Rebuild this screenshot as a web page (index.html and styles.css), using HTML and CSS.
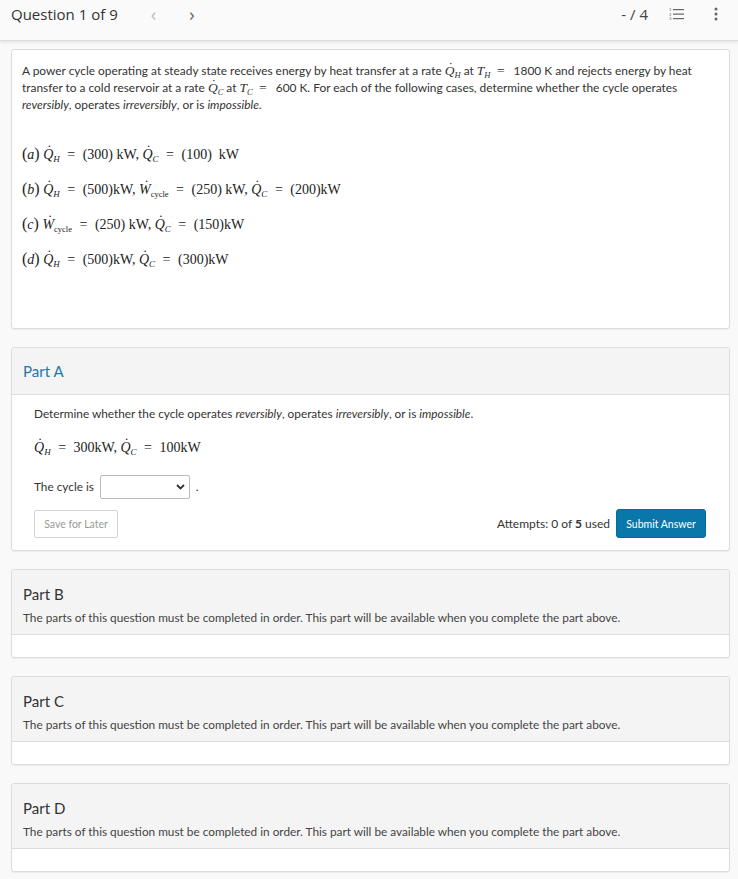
FILE: index.html
```html
<!DOCTYPE html>
<html>
<head>
<meta charset="utf-8">
<link rel="stylesheet" href="styles.css">
</head>
<body>
<header class="topbar">
  <div class="tb-left">
    <span class="qtitle">Question 1 of 9</span>
    <span class="nav prev">&lsaquo;</span>
    <span class="nav next">&rsaquo;</span>
  </div>
  <div class="tb-right">
    <span class="score">- / 4</span>
    <svg class="listicon" width="16" height="14" viewBox="0 0 16 14">
      <text x="0" y="4" font-size="4" fill="#666" font-family="DejaVu Sans">1</text>
      <text x="0" y="8.5" font-size="4" fill="#666" font-family="DejaVu Sans">2</text>
      <text x="0" y="13" font-size="4" fill="#666" font-family="DejaVu Sans">3</text>
      <rect x="4" y="2" width="11" height="1.2" fill="#666"/>
      <rect x="4" y="6.5" width="11" height="1.2" fill="#666"/>
      <rect x="4" y="11" width="11" height="1.2" fill="#666"/>
    </svg>
    <svg class="kebab" width="4" height="14" viewBox="0 0 4 14">
      <circle cx="2" cy="2" r="1.5" fill="#666"/>
      <circle cx="2" cy="7" r="1.5" fill="#666"/>
      <circle cx="2" cy="12" r="1.5" fill="#666"/>
    </svg>
  </div>
</header>

<main class="content">
  <section class="card intro">
    <p class="lead">A power cycle operating at steady state receives energy by heat transfer at a rate <span class="m"><span class="dot">Q</span><sub>H</sub></span> at <span class="m"><i>T</i><sub>H</sub> <span class="eq">=</span></span> &nbsp;1800 K and rejects energy by heat transfer to a cold reservoir at a rate <span class="m"><span class="dot">Q</span><sub>C</sub></span> at <span class="m"><i>T</i><sub>C</sub> <span class="eq">=</span></span> &nbsp;600 K. For each of the following cases, determine whether the cycle operates <em>reversibly</em>, operates <em>irreversibly</em>, or is <em>impossible</em>.</p>
    <div class="cases">
      <div class="mline"><span class="par">(</span><i>a</i><span class="par">)</span> <span class="dot">Q</span><sub>H</sub> <span class="eq">=</span> (300) kW, <span class="dot">Q</span><sub>C</sub> <span class="eq">=</span> (100) &nbsp;kW</div>
      <div class="mline"><span class="par">(</span><i>b</i><span class="par">)</span> <span class="dot">Q</span><sub>H</sub> <span class="eq">=</span> (500)kW, <span class="dot w">W</span><sub class="up">cycle</sub> <span class="eq">=</span> (250) kW, <span class="dot">Q</span><sub>C</sub> <span class="eq">=</span> (200)kW</div>
      <div class="mline"><span class="par">(</span><i>c</i><span class="par">)</span> <span class="dot w">W</span><sub class="up">cycle</sub> <span class="eq">=</span> (250) kW, <span class="dot">Q</span><sub>C</sub> <span class="eq">=</span> (150)kW</div>
      <div class="mline"><span class="par">(</span><i>d</i><span class="par">)</span> <span class="dot">Q</span><sub>H</sub> <span class="eq">=</span> (500)kW, <span class="dot">Q</span><sub>C</sub> <span class="eq">=</span> (300)kW</div>
    </div>
  </section>

  <section class="card part">
    <div class="part-head active">
      <h2 class="part-title blue">Part A</h2>
    </div>
    <div class="part-body">
      <p class="txt">Determine whether the cycle operates <em>reversibly</em>, operates <em>irreversibly</em>, or is <em>impossible</em>.</p>
      <div class="mline given"><span class="dot">Q</span><sub>H</sub> <span class="eq">=</span> 300kW, <span class="dot">Q</span><sub>C</sub> <span class="eq">=</span> 100kW</div>
      <div class="answer-row">
        <span class="txt">The cycle is</span>
        <span class="select">
          <svg width="9" height="6" viewBox="0 0 9 6"><path d="M1 1 L4.5 4.5 L8 1" stroke="#333" stroke-width="1.8" fill="none"/></svg>
        </span>
        <span class="txt">.</span>
      </div>
      <div class="actions">
        <button class="btn-save">Save for Later</button>
        <div class="submit-group">
          <span class="attempts">Attempts: 0 of <b>5</b> used</span>
          <button class="btn-submit">Submit Answer</button>
        </div>
      </div>
    </div>
  </section>

  <section class="card part">
    <div class="part-head locked">
      <h2 class="part-title">Part B</h2>
      <p class="locked-msg">The parts of this question must be completed in order. This part will be available when you complete the part above.</p>
    </div>
    <div class="part-foot"></div>
  </section>

  <section class="card part">
    <div class="part-head locked">
      <h2 class="part-title">Part C</h2>
      <p class="locked-msg">The parts of this question must be completed in order. This part will be available when you complete the part above.</p>
    </div>
    <div class="part-foot"></div>
  </section>

  <section class="card part">
    <div class="part-head locked">
      <h2 class="part-title">Part D</h2>
      <p class="locked-msg">The parts of this question must be completed in order. This part will be available when you complete the part above.</p>
    </div>
    <div class="part-foot"></div>
  </section>
</main>
</body>
</html>
```

FILE: styles.css
```css
* { box-sizing: border-box; }
html, body { margin: 0; padding: 0; }
body {
  background: #f9f9f9;
  font-family: Lato, "Open Sans", sans-serif;
  color: #333;
  width: 738px;
}

.topbar {
  height: 41px;
  background: #fafafa;
  border-bottom: 1px solid #dcdcdc;
  box-shadow: 0 2px 3px rgba(0,0,0,0.08);
  display: flex;
  align-items: center;
  justify-content: space-between;
  padding: 0 20px 0 11px;
  font-family: "Open Sans", sans-serif;
}
.tb-left { display: flex; align-items: center; margin-top: -12px; }
.qtitle { font-size: 15px; color: #333; }
.nav { font-size: 18px; color: #666; line-height: 1; }
.nav.prev { color: #bbb; margin-left: 33px; }
.nav.next { margin-left: 33px; }
.tb-right { display: flex; align-items: center; margin-top: -12px; }
.score { font-size: 15px; color: #444; }
.listicon { margin-left: 21px; }
.kebab { margin-left: 29px; }

.content {
  padding: 8px 8px 10px 11px;
  display: flex;
  flex-direction: column;
  gap: 18px;
}

.card {
  background: #fff;
  border: 1px solid #dcdcdc;
  border-radius: 3px;
  box-shadow: 0 1px 1px rgba(0,0,0,0.05);
}

.intro {
  padding: 12px 10px 58px 10px;
}
.lead {
  margin: 0;
  font-size: 11.9px;
  line-height: 17px;
  color: #333;
}
.lead em { font-style: italic; }
.m { font-family: "Liberation Serif", serif; font-size: 13.5px; line-height: 0; }
.m i { font-style: italic; }
.m sub { font-size: 8.5px; font-style: italic; vertical-align: -3px; line-height: 0; }
.m .eq { margin: 0 3px; }

.dot {
  position: relative;
  font-style: italic;
  font-family: "Liberation Serif", serif;
}
.dot::before {
  content: "\02D9";
  position: absolute;
  left: 0.27em;
  top: -0.22em;
  line-height: 1;
  font-style: normal;
  font-size: 1em;
}
.dot.w::before { left: 0.38em; }

.cases { margin-top: 31px; display: flex; flex-direction: column; gap: 14px; }
.mline {
  font-family: "Liberation Serif", serif;
  font-size: 14px;
  line-height: 20px;
  color: #222;
  white-space: nowrap;
}
.mline sub { font-size: 9px; font-style: italic; vertical-align: -3px; line-height: 0; }
.mline sub.up { font-style: normal; font-size: 8.5px; }
.mline i { font-style: italic; }
.par { font-size: 16px; }
.eq { margin: 0 4px; }

.part-head {
  background: #f4f4f4;
  border-bottom: 1px solid #dcdcdc;
  border-radius: 3px 3px 0 0;
}
.part-head.active { height: 47px; display: flex; align-items: center; padding: 0 11px; }
.part-head.locked { padding: 13px 11px 8px; }
.part-title {
  margin: 0;
  font-size: 15px;
  font-weight: 400;
  color: #333;
  line-height: 22px;
}
.part-title.blue { color: #2376a8; }
.locked-msg {
  margin: 5px 0 0;
  font-size: 11.8px;
  line-height: 16px;
  color: #444;
}
.part-foot { height: 22px; }

.part-body { padding: 11px 23px 12px 22px; }
.txt { font-size: 11.8px; color: #333; margin: 0; line-height: 16px; }
.txt em { font-style: italic; }
.given { margin-top: 16px; }
.answer-row { display: flex; align-items: center; margin-top: 17px; gap: 6px; }
.select {
  width: 90px;
  height: 24px;
  border: 1px solid #bbb;
  border-radius: 2px;
  background: #fff;
  display: flex;
  align-items: center;
  justify-content: flex-end;
  padding-right: 4px;
}
.actions {
  display: flex;
  justify-content: space-between;
  align-items: center;
  margin-top: 10px;
}
.btn-save {
  font-family: Lato, sans-serif;
  font-size: 10.5px;
  color: #999;
  background: #fff;
  border: 1px solid #d4d4d4;
  border-radius: 2px;
  width: 84px;
  height: 28px;
  padding: 0;
}
.submit-group { display: flex; align-items: center; gap: 6px; }
.attempts { font-size: 12px; color: #333; }
.attempts b { font-weight: 700; }
.btn-submit {
  font-family: Lato, sans-serif;
  font-size: 10.5px;
  color: #fff;
  background: #0a77aa;
  border: 1px solid #086a99;
  border-radius: 3px;
  width: 90px;
  height: 29px;
  padding: 0;
}
```
